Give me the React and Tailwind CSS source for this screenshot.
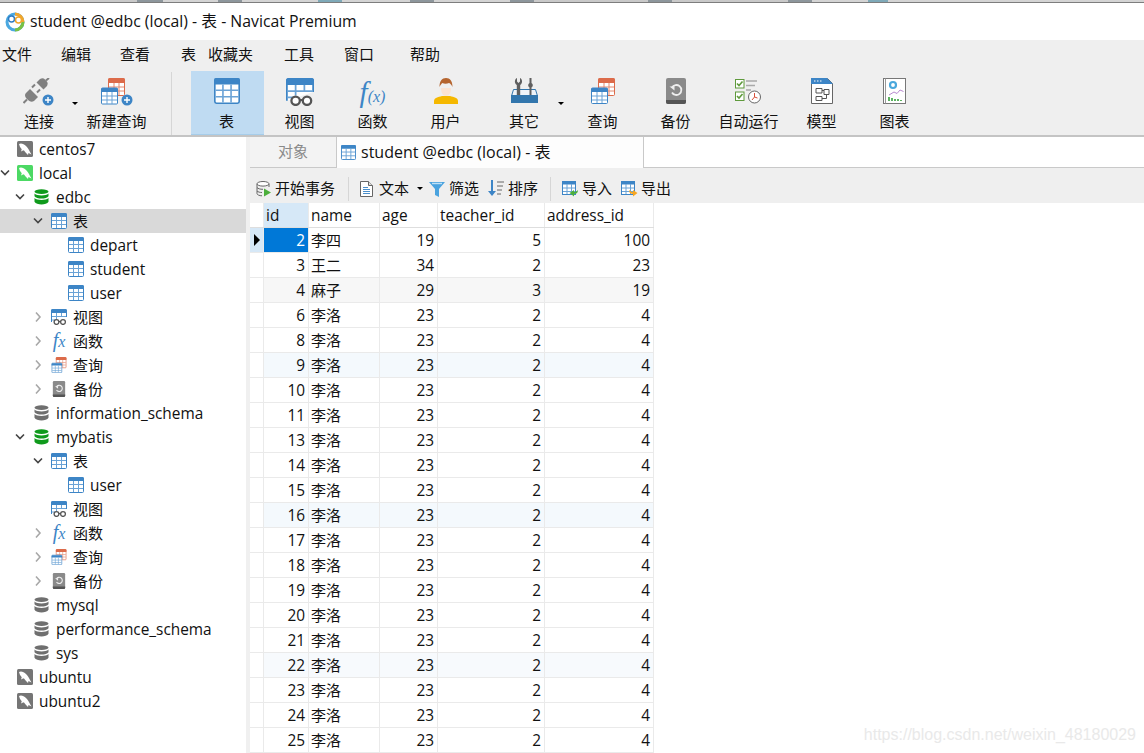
import React from "react";

const font = { fontFamily: '"Open Sans", "Noto Sans CJK SC", sans-serif' };

function TableIcon({ size = 16 }) {
  return (
    <svg width={size} height={size} viewBox="0 0 16 16" className="shrink-0">
      <rect x="0.5" y="0.5" width="15" height="15" rx="1" fill="#fff" stroke="#3d85c6" />
      <path d="M0 1.5a1.5 1.5 0 0 1 1.5-1.5h13a1.5 1.5 0 0 1 1.5 1.5V4H0z" fill="#3d85c6" />
      <path d="M1 7.5h14M1 11.5h14M5.5 4v11M10.5 4v11" stroke="#6ba3d6" strokeWidth="1" fill="none" />
    </svg>
  );
}

function ViewIcon({ size = 16 }) {
  return (
    <svg width={size} height={size} viewBox="0 0 16 16" className="shrink-0">
      <path d="M0.5 13V1.5a1 1 0 0 1 1-1h13a1 1 0 0 1 1 1V8" fill="#fff" stroke="#3d85c6" />
      <path d="M0 1.5a1.5 1.5 0 0 1 1.5-1.5h13a1.5 1.5 0 0 1 1.5 1.5V4H0z" fill="#3d85c6" />
      <path d="M1 7.5h14M1 11h4M5.5 4v6M10.5 4v4" stroke="#6ba3d6" fill="none" />
      <circle cx="5.5" cy="13" r="2.4" fill="#fff" stroke="#555" strokeWidth="1.3" />
      <circle cx="12" cy="13" r="2.4" fill="#fff" stroke="#555" strokeWidth="1.3" />
      <path d="M7.8 12.6h1.9" stroke="#555" strokeWidth="1.2" />
    </svg>
  );
}

function FxIcon({ size = 16 }) {
  const big = size > 20;
  return (
    <span
      className="shrink-0 italic text-[#3d85c6] whitespace-nowrap text-center"
      style={{
        fontFamily: '"Liberation Serif", serif',
        fontSize: big ? 29 : 20,
        lineHeight: `${size}px`,
        width: size,
      }}
    >
      f{big ? <span className="text-[16px]">(x)</span> : <span className="text-[16px]">x</span>}
    </span>
  );
}

function QueryIcon({ size = 16 }) {
  return (
    <svg width={size} height={size} viewBox="0 0 24 26" className="shrink-0">
      <rect x="7.5" y="0.5" width="16" height="17" rx="1" fill="#fff" stroke="#dc6b4a" />
      <path d="M7 2a2 2 0 0 1 2-2h13a2 2 0 0 1 2 2v3H7z" fill="#dc6b4a" />
      <path d="M8 9h15M8 13h15M13 5v12M18 5v12" stroke="#e28a70" fill="none" />
      <rect x="0.5" y="10" width="16" height="15.5" rx="1" fill="#fff" stroke="#3d85c6" />
      <path d="M0 11.5a1.5 1.5 0 0 1 1.5-1.5h14a1.5 1.5 0 0 1 1.5 1.5V14H0z" fill="#3d85c6" />
      <path d="M1 18h15M1 22h15M6 14v11M11 14v11" stroke="#6ba3d6" fill="none" />
    </svg>
  );
}

function NewQueryIcon() {
  return (
    <svg width="32" height="28" viewBox="0 0 32 28" className="shrink-0">
      <rect x="7.5" y="0.5" width="16" height="17" rx="1" fill="#fff" stroke="#dc6b4a" />
      <path d="M7 2a2 2 0 0 1 2-2h13a2 2 0 0 1 2 2v3H7z" fill="#dc6b4a" />
      <path d="M8 9h15M8 13h15M13 5v12M18 5v12" stroke="#e28a70" fill="none" />
      <rect x="0.5" y="10" width="16" height="16" rx="1" fill="#fff" stroke="#3d85c6" />
      <path d="M0 11.5a1.5 1.5 0 0 1 1.5-1.5h14a1.5 1.5 0 0 1 1.500 1.500V14H0z" fill="#3d85c6" />
      <path d="M1 18h15M1 22h15M6 14v12M11 14v12" stroke="#6ba3d6" fill="none" />
      <circle cx="26" cy="22" r="5.500" fill="#3d85c6" />
      <path d="M23 22h6M26 19v6" stroke="#fff" strokeWidth="1.400" />
    </svg>
  );
}

function PlugIcon() {
  return (
    <svg width="32" height="28" viewBox="0 0 32 28" className="shrink-0">
      <g fill="#808080">
        <path d="M7 11L15 19L11 23Q8 25 5 22L3 20Q1 17 3 15Z" />
        <path d="M13.500 4.500L17 1Q20-.5 22 1.500L23.500 3Q25.500 5 24 8L20.500 11.500Z" />
      </g>
      <path d="M9 9.500l3-3M14 14.500l3-3M4 21.500L.5 25M23 2.500L26 0" stroke="#808080" strokeWidth="2" fill="none" />
      <circle cx="25" cy="22" r="5.500" fill="#3d85c6" />
      <path d="M22 22h6M25 19v6" stroke="#fff" strokeWidth="1.400" />
    </svg>
  );
}

function BackupIcon({ size = 16 }) {
  return (
    <svg width={size} height={size} viewBox="0 0 20 26" className="shrink-0">
      <rect x="0" y="0" width="20" height="26" rx="2" fill="#8a8a8a" />
      <path d="M0 22h20v2a2 2 0 0 1-2 2H2a2 2 0 0 1-2-2z" fill="#555" />
      <path d="M6 9.500a5 5 0 1 1 0 5" fill="none" stroke="#eee" strokeWidth="1.800" />
      <path d="M3.500 8.500h5v4z" fill="#eee" />
    </svg>
  );
}

function DbIcon({ color }) {
  const dark = color === "green" ? "#0f9a1c" : "#6f6f6f";
  return (
    <svg width="16" height="16" viewBox="0 0 16 16" className="shrink-0">
      <ellipse cx="7.500" cy="2.600" rx="7" ry="2.400" fill={dark} />
      <path d="M.5 4.600c1.500 1.400 4 1.900 7 1.900s5.500-.5 7-1.900v2.600c-1 1.500-4 2.300-7 2.300s-6-.8-7-2.300z" fill={dark} />
      <path d="M.5 9c1.500 1.400 4 1.900 7 1.900S13 10.400 14.500 9v3.800c-1 1.700-4 2.700-7 2.700s-6-1-7-2.700z" fill={dark} />
    </svg>
  );
}

function ConnIcon({ bg }) {
  return (
    <svg width="16" height="16" viewBox="0 0 16 16" className="shrink-0">
      <rect width="16" height="16" rx="1.500" fill={bg} />
      <path
        d="M2 3C4 1.500 7 3 9 5C11 7 12 9 13 11L14.500 13.500L11.500 12L11 14C9.500 12.500 8 11 7 9.500C5 9 3 7 2 3Z"
        fill="#fff"
      />
      <path d="M5 7.500L4 10.500L7 9Z" fill="#fff" />
    </svg>
  );
}

function Caret({ open }) {
  return (
    <svg width="10" height="12" viewBox="0 0 10 12" className="shrink-0">
      {open ? (
        <path d="M1 3.500l4 4 4-4" fill="none" stroke="#444" strokeWidth="1.600" />
      ) : (
        <path d="M3 1.500l4 4.500-4 4.500" fill="none" stroke="#a8a8a8" strokeWidth="1.600" />
      )}
    </svg>
  );
}

function UserIcon() {
  return (
    <svg width="24" height="26" viewBox="0 0 24 26" className="shrink-0">
      <path d="M0 26v-3c0-3 4-4 8-5h8c4 1 8 2 8 5v3z" fill="#f5b800" />
      <path d="M7 10c0 5 2 8 5 8s5-3 5-8z" fill="#fbe3d2" />
      <path d="M5.500 9C5.500 3 8 0 12 0s6.500 3 6.500 9c-1-2-2-3.500-3.500-4-2 1-5 1-6.500 0-1 .5-2 2-3 4z" fill="#b5652f" />
    </svg>
  );
}

function ToolsIcon() {
  return (
    <svg width="27" height="26" viewBox="0 0 27 26" className="shrink-0">
      <path d="M.5 18L2.500 11.500H24.500L26.500 18" fill="#eef3f8" stroke="#3276ad" />
      <rect x="0" y="17" width="27" height="8" fill="#3276ad" />
      <path d="M6 0C3.500 1 3 5 5.800 7V17H9.200V7C12 5 11.500 1 9 0V3.500L7.500 5L6 3.500Z" fill="#5f5f5f" />
      <path d="M18.500 0H20.500V5C22.300 6 22.300 8.500 20.500 9.500V17H18.500V9.500C16.700 8.500 16.700 6 18.500 5Z" fill="#5f5f5f" />
    </svg>
  );
}

function ScheduleIcon() {
  return (
    <svg width="27" height="26" viewBox="0 0 27 26" className="shrink-0">
      <rect x="0.500" y="1.500" width="8.500" height="8.500" fill="#fff" stroke="#5f9a3c" />
      <path d="M2 5.500l2 2 3.500-4" stroke="#5f9a3c" strokeWidth="1.600" fill="none" />
      <rect x="0.500" y="14" width="8.500" height="8.500" fill="#fff" stroke="#5f9a3c" />
      <path d="M2 18l2 2 3.500-4" stroke="#5f9a3c" strokeWidth="1.600" fill="none" />
      <path d="M11 3h11M11 7.500h9M11 12h5" stroke="#a9a9a9" strokeWidth="1.600" />
      <circle cx="19.500" cy="19" r="6" fill="#fff" stroke="#666" />
      <path d="M19.500 15v4l-2.500 3M19.500 19l3 1" stroke="#d8503a" fill="none" />
    </svg>
  );
}

function ModelIcon() {
  return (
    <svg width="22" height="26" viewBox="0 0 22 26" className="shrink-0">
      <path d="M.5.5h16l5 5v20H.5z" fill="#fff" stroke="#666" />
      <path d="M0 0h16l6 6H0z" fill="#3d85c6" />
      <path d="M3 3h1.500M6 3h1.500M9 3h1.500" stroke="#fff" />
      <path d="M5 10.500h6v4.500H5zM13 11.500h5v5h-5zM5 18.500h6v4H5z" fill="#fff" stroke="#555" />
      <path d="M11 12.500h2M15.500 16.500v4H11" fill="none" stroke="#555" />
    </svg>
  );
}

function ChartIcon() {
  return (
    <svg width="23" height="26" viewBox="0 0 23 26" className="shrink-0">
      <rect x="0.500" y="0.500" width="22" height="25" fill="#fff" stroke="#777" />
      <path d="M2.500.5v25" stroke="#999" />
      <circle cx="10" cy="7" r="3" fill="none" stroke="#4aa8dc" strokeWidth="2.200" />
      <path d="M6 17l5-3 3 1.500 3-3.500 3.500 1.500" fill="none" stroke="#b98ad0" />
      <path d="M6 23v-4M9 23v-3M12 23v-2M15 23v-2M18 23v-1" stroke="#4cab50" strokeWidth="1.800" />
    </svg>
  );
}

function DocIcon() {
  return (
    <svg width="13" height="16" viewBox="0 0 13 16" className="shrink-0">
      <path d="M.5.5h8l4 4v11H.5z" fill="#fff" stroke="#666" />
      <path d="M8.500.5v4h4" fill="#ddd" stroke="#666" />
      <path d="M3 6.500h5M3 8.500h7M3 10.500h7M3 12.500h7" stroke="#4a8fcc" />
    </svg>
  );
}

function BeginIcon() {
  return (
    <svg width="16" height="16" viewBox="0 0 16 16" className="shrink-0">
      <ellipse cx="7" cy="2.800" rx="6" ry="2.300" fill="#fff" stroke="#666" />
      <path d="M1 3v9.500c0 1.300 2.500 2.300 5 2.300M13 3v3M1 6.500c1 1.200 3 1.800 6 1.800M1 10c1 1 3 1.500 5 1.500" fill="none" stroke="#666" />
      <path d="M8 7.500l7 4-7 4z" fill="#4caf3c" />
    </svg>
  );
}

function FilterIcon() {
  return (
    <svg width="16" height="16" viewBox="0 0 16 16" className="shrink-0">
      <path d="M0 1h16l-6 7v8l-4-2V8z" fill="#4aa3df" />
      <path d="M3 2.500h10" stroke="#bfe0f5" strokeWidth="1.400" />
    </svg>
  );
}

function SortIcon() {
  return (
    <svg width="17" height="17" viewBox="0 0 17 17" className="shrink-0">
      <path d="M4 0v12" stroke="#3d85c6" strokeWidth="2" />
      <path d="M0 11h8l-4 5z" fill="#3d85c6" />
      <path d="M9 2h7M9 6h6M9 10h5M9 14h4" stroke="#666" />
    </svg>
  );
}

function ImportExportIcon({ arrow, flip }) {
  return (
    <svg width="17" height="16" viewBox="0 0 17 16" className="shrink-0">
      <rect x="0.500" y="0.500" width="13" height="13" fill="#fff" stroke="#3d85c6" />
      <path d="M0 0h14v3.500H0z" fill="#3d85c6" />
      <path d="M1 7h12M1 10.500h12M5 3v10M9.500 3v10" stroke="#6ba3d6" />
      <path
        d={flip ? "M8 9c0 3 2 4 4 4v2.500L16.500 12 12 9v2c-1 0-2.500-.5-4-2z" : "M16 9c0 3-2 4-4 4v2.500L7.500 12 12 9v2c1 0 2.500-.5 4-2z"}
        fill={arrow}
      />
    </svg>
  );
}

function ToolBtn({ icon, label, width = "w-[73px] pr-[2px]", active, caret }) {
  return (
    <div
      className={`relative mt-[1px] flex h-[64px] shrink-0 flex-col items-center ${width} ${
        active ? "bg-[#bfdbf2] border-b border-[#a6cdea]" : ""
      }`}
    >
      <div className="flex h-[35px] items-start justify-center pt-[7px]">{icon}</div>
      <div className="mt-[5px] text-[15px] leading-[20px] text-[#111] whitespace-nowrap">{label}</div>
      {caret && (
        <span className={`absolute top-[31px] h-0 w-0 border-x-[3px] border-t-[3px] border-x-transparent border-t-black ${caret}`} />
      )}
    </div>
  );
}

const menus = [
  ["文件", "w-[59px]"],
  ["编辑", "w-[59px]"],
  ["查看", "w-[61px]"],
  ["表", "w-[27px]"],
  ["收藏夹", "w-[76px]"],
  ["工具", "w-[60px]"],
  ["窗口", "w-[66px]"],
  ["帮助", "w-[60px]"],
];

const tree = [
  { d: 0, icon: <ConnIcon bg="#757575" />, t: "centos7" },
  { d: 0, open: true, icon: <ConnIcon bg="#4cd964" />, t: "local" },
  { d: 1, open: true, icon: <DbIcon color="green" />, t: "edbc" },
  { d: 2, open: true, icon: <TableIcon />, t: "表", sel: true, cjk: true },
  { d: 3, icon: <TableIcon />, t: "depart" },
  { d: 3, icon: <TableIcon />, t: "student" },
  { d: 3, icon: <TableIcon />, t: "user" },
  { d: 2, closed: true, icon: <ViewIcon />, t: "视图", cjk: true },
  { d: 2, closed: true, icon: <FxIcon />, t: "函数", cjk: true },
  { d: 2, closed: true, icon: <QueryIcon />, t: "查询", cjk: true },
  { d: 2, closed: true, icon: <BackupIcon />, t: "备份", cjk: true },
  { d: 1, icon: <DbIcon />, t: "information_schema" },
  { d: 1, open: true, icon: <DbIcon color="green" />, t: "mybatis" },
  { d: 2, open: true, icon: <TableIcon />, t: "表", cjk: true },
  { d: 3, icon: <TableIcon />, t: "user" },
  { d: 2, icon: <ViewIcon />, t: "视图", cjk: true },
  { d: 2, closed: true, icon: <FxIcon />, t: "函数", cjk: true },
  { d: 2, closed: true, icon: <QueryIcon />, t: "查询", cjk: true },
  { d: 2, closed: true, icon: <BackupIcon />, t: "备份", cjk: true },
  { d: 1, icon: <DbIcon />, t: "mysql" },
  { d: 1, icon: <DbIcon />, t: "performance_schema" },
  { d: 1, icon: <DbIcon />, t: "sys" },
  { d: 0, icon: <ConnIcon bg="#757575" />, t: "ubuntu" },
  { d: 0, icon: <ConnIcon bg="#757575" />, t: "ubuntu2" },
];

const indent = ["pl-[17px]", "pl-[34px]", "pl-[51px]", "pl-[68px]"];
const caretPos = ["left-[0px]", "left-[15px]", "left-[33px]", "left-[50px]"];

function TreeRow({ row }) {
  return (
    <div
      className={`relative flex h-[24px] items-center gap-[6px] ${indent[row.d]} ${
        row.sel ? "bg-[#d9d9d9]" : ""
      }`}
    >
      {(row.open || row.closed) && (
        <span className={`absolute top-[6px] ${caretPos[row.d]}`}>
          <Caret open={row.open} />
        </span>
      )}
      {row.icon}
      <span className={`whitespace-nowrap leading-[24px] text-[#111] ${row.cjk ? "text-[15px]" : "pt-[2px] text-[15.4px]"}`}>{row.t}</span>
    </div>
  );
}

const rows = [
  [2, "李四", 19, 5, 100],
  [3, "王二", 34, 2, 23],
  [4, "麻子", 29, 3, 19],
  ...[6, 8, 9, 10, 11, 13, 14, 15, 16, 17, 18, 19, 20, 21, 22, 23, 24, 25].map((id) => [id, "李洛", 23, 2, 4]),
];

const headers = [
  ["id", "w-[45px]", "bg-[#d6e8f7]"],
  ["name", "w-[71px]", ""],
  ["age", "w-[58px]", ""],
  ["teacher_id", "w-[107px]", ""],
  ["address_id", "w-[109px]", ""],
];

function rowBg(id) {
  if (id === 4) return "bg-[#f7f7f7]";
  if (id === 9 || id === 16) return "bg-[#f4f9fd]";
  if (id === 22) return "bg-[#f7fafd]";
  return "bg-white";
}

function Cell({ children, w, left, className = "" }) {
  return (
    <div
      className={`flex h-full shrink-0 items-center border-r border-[#eaeaea] ${w} ${
        left ? "pl-[2px]" : "justify-end pr-[3px]"
      } ${className}`}
    >
      {children}
    </div>
  );
}

const strip = [
  ["w-[137px]", "bg-[#c9c9c9]"],
  ["w-[26px]", "bg-[#8d969c]"],
  ["w-[55px]", "bg-[#d4d4d4]"],
  ["w-[24px]", "bg-[#8d969c]"],
  ["w-[76px]", "bg-[#d4d4d4]"],
  ["w-[24px]", "bg-[#7fa9b8]"],
  ["w-[68px]", "bg-[#d4d4d4]"],
  ["w-[24px]", "bg-[#8d969c]"],
  ["w-[76px]", "bg-[#d4d4d4]"],
  ["w-[24px]", "bg-[#8d969c]"],
  ["w-[114px]", "bg-[#c9c9c9]"],
  ["w-[24px]", "bg-[#8d969c]"],
  ["w-[116px]", "bg-[#c9c9c9]"],
  ["w-[24px]", "bg-[#8d969c]"],
  ["w-[56px]", "bg-[#d4d4d4]"],
  ["w-[20px]", "bg-[#7fa9b8]"],
  ["flex-1", "bg-[#d4d4d4]"],
];

export default function App() {
  return (
    <div className="relative flex h-[753px] w-[1144px] flex-col overflow-hidden bg-white" style={font}>
      {/* bit of the window behind */}
      <div className="flex h-[2px] shrink-0">
        {strip.map(([w, c], i) => (
          <div key={i} className={`${w} ${c}`} />
        ))}
      </div>
      <div className="h-[1px] shrink-0 bg-[#7d7d7d]" />

      {/* title */}
      <div className="flex h-[37px] shrink-0 items-center gap-[5px] pl-[5px]">
        <svg width="20" height="20" viewBox="0 0 20 20" className="shrink-0">
          <circle cx="10" cy="10" r="8" fill="#fff" stroke="#4aa8e0" strokeWidth="3" />
          <path d="M10 2a8 8 0 0 1 8 8" fill="none" stroke="#f2a62b" strokeWidth="3" />
          <path d="M18 10a8 8 0 0 1-8 8" fill="none" stroke="#7ac143" strokeWidth="3" />
          <circle cx="6.500" cy="7" r="3" fill="#fff" stroke="#2e7cc4" strokeWidth="1.500" />
          <circle cx="13.500" cy="8" r="3" fill="#fff" stroke="#f2a62b" strokeWidth="1.500" />
        </svg>
        <span className="text-[15.8px] text-[#111] whitespace-nowrap">student @edbc (local) - 表 - Navicat Premium</span>
      </div>

      {/* menu */}
      <div className="flex h-[30px] shrink-0 items-center bg-[#efefef] pb-[1px] pl-[2px] text-[15px] text-[#111]">
        {menus.map(([m, w]) => (
          <span key={m} className={`${w} whitespace-nowrap`}>
            {m}
          </span>
        ))}
      </div>

      {/* toolbar */}
      <div className="flex h-[67px] shrink-0 items-start border-b-2 border-[#c4c4c4] bg-[#efefef] pl-[2px]">
        <ToolBtn icon={<PlugIcon />} label="连接" width="w-[74px]" caret="left-[70px]" />
        <div className="w-[4px] shrink-0" />
        <ToolBtn icon={<NewQueryIcon />} label="新建查询" width="w-[73px]" />
        <div className="ml-[18px] mr-[19px] mt-[2px] h-[63px] w-px shrink-0 bg-[#d6d6d6]" />
        <ToolBtn icon={<TableIcon size={26} />} label="表" active />
        <ToolBtn icon={<ViewIcon size={28} />} label="视图" />
        <ToolBtn icon={<FxIcon size={28} />} label="函数" />
        <ToolBtn icon={<UserIcon />} label="用户" />
        <ToolBtn icon={<ToolsIcon />} label="其它" width="w-[84px] pr-[2px]" caret="left-[75px]" />
        <ToolBtn icon={<QueryIcon size={26} />} label="查询" />
        <ToolBtn icon={<BackupIcon size={26} />} label="备份" />
        <ToolBtn icon={<ScheduleIcon />} label="自动运行" />
        <ToolBtn icon={<ModelIcon />} label="模型" />
        <ToolBtn icon={<ChartIcon />} label="图表" />
      </div>

      <div className="flex min-h-0 flex-1">
        {/* tree */}
        <div className="w-[246px] shrink-0 overflow-hidden bg-white">
          {tree.map((row, i) => (
            <TreeRow key={i} row={row} />
          ))}
        </div>
        <div className="w-[4px] shrink-0 bg-[#f0f0f0]" />

        {/* right */}
        <div className="flex min-w-0 flex-1 flex-col">
          <div className="flex h-[31px] shrink-0 items-end bg-white">
            <div className="flex h-full w-[86px] shrink-0 items-center justify-center border-b border-[#c9c9c9] bg-[#f3f3f3] pb-[1px] text-[15px] text-[#8a8a8a]">
              对象
            </div>
            <div className="flex h-full w-[308px] shrink-0 items-center gap-[5px] border-l border-r border-[#c9c9c9] bg-[#fdfdfd] pb-[1px] pl-[4px] text-[16px] text-[#111]">
              <TableIcon size={15} />
              <span className="whitespace-nowrap">student @edbc (local) - 表</span>
            </div>
            <div className="h-full flex-1 border-b border-[#c9c9c9]" />
          </div>

          <div className="flex h-[35px] shrink-0 items-center bg-[#efefef] pl-[6px] pt-[6px] text-[15px] text-[#111]">
            <BeginIcon />
            <span className="ml-[3px] whitespace-nowrap">开始事务</span>
            <div className="ml-[13px] mr-[11px] h-[24px] w-px bg-[#d6d6d6]" />
            <DocIcon />
            <span className="ml-[6px] whitespace-nowrap">文本</span>
            <span className="ml-[8px] h-0 w-0 border-x-[3px] border-t-[3px] border-x-transparent border-t-black" />
            <span className="ml-[6px]">
              <FilterIcon />
            </span>
            <span className="ml-[4px] whitespace-nowrap">筛选</span>
            <span className="ml-[9px]">
              <SortIcon />
            </span>
            <span className="ml-[3px] whitespace-nowrap">排序</span>
            <div className="ml-[12px] mr-[11px] h-[24px] w-px bg-[#d6d6d6]" />
            <ImportExportIcon arrow="#4caf3c" />
            <span className="ml-[3px] whitespace-nowrap">导入</span>
            <span className="ml-[9px]">
              <ImportExportIcon arrow="#f5a623" flip />
            </span>
            <span className="ml-[3px] whitespace-nowrap">导出</span>
          </div>

          {/* grid */}
          <div className="min-h-0 flex-1 overflow-hidden bg-white text-[15.4px] text-[#111]">
            <div className="flex h-[25px] w-[404px] border-b border-[#dedede] bg-white">
              <div className="h-full w-[14px] shrink-0 border-r border-[#eaeaea]" />
              {headers.map(([h, w, bg]) => (
                <Cell key={h} w={w} left className={`pt-[2px] ${bg}`}>
                  {h}
                </Cell>
              ))}
            </div>
            {rows.map((r, i) => (
              <div key={r[0]} className={`flex h-[25px] w-[404px] border-b border-[#eaeaea] ${rowBg(r[0])}`}>
                <div
                  className={`flex h-full w-[14px] shrink-0 items-center justify-center border-r border-[#eaeaea] ${
                    i === 0 ? "bg-[#d6e8f7]" : "bg-white"
                  }`}
                >
                  {i === 0 && <span className="h-0 w-0 border-y-[6px] border-l-[6px] border-y-transparent border-l-black" />}
                </div>
                <Cell w="w-[45px]" className={i === 0 ? "bg-[#0078d7] pt-[2px] text-white" : "pt-[2px]"}>
                  {r[0]}
                </Cell>
                <Cell w="w-[71px]" left className="text-[15px]">
                  {r[1]}
                </Cell>
                <Cell w="w-[58px]" className="pt-[2px]">{r[2]}</Cell>
                <Cell w="w-[107px]" className="pt-[2px]">{r[3]}</Cell>
                <Cell w="w-[109px]" className="pt-[2px]">{r[4]}</Cell>
              </div>
            ))}
          </div>
        </div>
      </div>

      {/* watermark */}
      <div className="absolute bottom-[9px] right-[8px] whitespace-nowrap text-[16px] leading-[18px] text-[#e9e9e9]" style={{ fontFamily: '"Liberation Sans", sans-serif' }}>
        https://blog.csdn.net/weixin_48180029
      </div>
    </div>
  );
}
